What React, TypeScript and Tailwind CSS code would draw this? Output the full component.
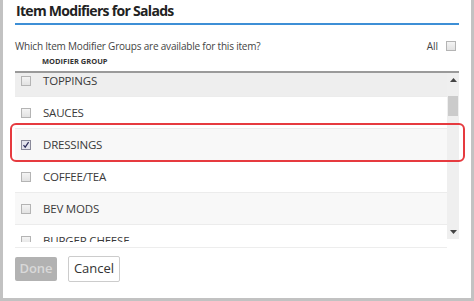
import React from 'react';

const groups = [
  { name: 'TOPPINGS', checked: false, bg: 'bg-[#eeeeee]' },
  { name: 'SAUCES', checked: false, bg: 'bg-white' },
  { name: 'DRESSINGS', checked: true, bg: 'bg-[#f8f8f8]' },
  { name: 'COFFEE/TEA', checked: false, bg: 'bg-white' },
  { name: 'BEV MODS', checked: false, bg: 'bg-[#f8f8f8]' },
  { name: 'BURGER CHEESE', checked: false, bg: 'bg-white' },
];

const Checkbox: React.FC<{ checked?: boolean }> = ({ checked }) => (
  <span
    className={`flex h-[10px] w-[10px] shrink-0 items-center justify-center border ${
      checked ? 'border-[#8a8a9a] bg-[#e4e4ee]' : 'border-[#b4b4b4] bg-gradient-to-b from-[#f4f4f4] to-[#e2e2e2]'
    }`}
  >
    {checked && (
      <svg width="8" height="8" viewBox="0 0 8 8">
        <path d="M1.5 4.2 L3.2 6.2 L6.6 1.2" fill="none" stroke="#2c2c5a" strokeWidth="1.2" />
      </svg>
    )}
  </span>
);

export default function App() {
  return (
    <div
      className="relative h-[301px] w-[474px] overflow-hidden border-x-[3px] border-b-[3px] border-[#c2c2c2] bg-white px-[12px] text-[#444]"
      style={{ fontFamily: '"Open Sans", "Noto Sans", sans-serif' }}
    >
      <div className="border-b-2 border-[#3d8fd6] pb-[3px] pl-[1px] pt-[2px]">
        <h1 className="text-[14px] font-bold leading-[18px] tracking-[-0.7px] text-[#222]">
          Item Modifiers for Salads
        </h1>
      </div>

      <div className="mt-[14px] flex h-[14px] items-center justify-between">
        <p className="text-[10px] leading-[14px] tracking-[-0.2px] text-[#444]">
          Which Item Modifier Groups are available for this item?
        </p>
        <div className="flex items-center gap-[8px] pr-[3px]">
          <span className="text-[10px] text-[#444]">All</span>
          <Checkbox />
        </div>
      </div>

      <div className="mt-[4px] border-b-2 border-[#9a9a9a] pb-[5px] pl-[27px] text-[7.5px] font-bold leading-[9px] text-[#333]">
        MODIFIER GROUP
      </div>

      <div className="flex h-[169px]">
        <div className="h-full flex-1 overflow-hidden">
          <div className="-mt-[8px]">
            {groups.map((g) => (
              <div
                key={g.name}
                className={`flex h-[32px] items-center gap-[12px] border-b border-[#ececec] pl-[6px] ${g.bg}`}
              >
                <Checkbox checked={g.checked} />
                <span className="text-[11.5px] tracking-[-0.2px] text-[#3a3a3a]">{g.name}</span>
              </div>
            ))}
          </div>
        </div>
        <div className="flex h-[166px] w-[12px] flex-col items-center bg-[#efefef]">
          <svg width="7" height="4" viewBox="0 0 7 4" className="mt-[5px]">
            <path d="M0 4 L3.5 0 L7 4 Z" fill="#444" />
          </svg>
          <div className="mt-[14px] h-[20px] w-[10px] bg-[#cbcbcb]" />
          <div className="flex-1" />
          <svg width="7" height="4" viewBox="0 0 7 4" className="mb-[5px]">
            <path d="M0 0 L7 0 L3.5 4 Z" fill="#444" />
          </svg>
        </div>
      </div>
      <div className="mr-[12px] mt-[5px] h-px bg-[#ededed]" />

      <div className="mt-[8px] flex items-center gap-[11px]">
        <button className="h-[24px] w-[42px] rounded-[2px] bg-[#b2b2b2] text-[13px] font-semibold text-[#d9d9d9]">
          Done
        </button>
        <button className="h-[26px] w-[52px] rounded-[2px] border border-[#cccccc] bg-white text-[13px] text-[#333]">
          Cancel
        </button>
      </div>

      <div className="pointer-events-none absolute left-[7px] top-[123px] h-[39px] w-[455px] rounded-[6px] border-2 border-[#e63a3f]" />
    </div>
  );
}
